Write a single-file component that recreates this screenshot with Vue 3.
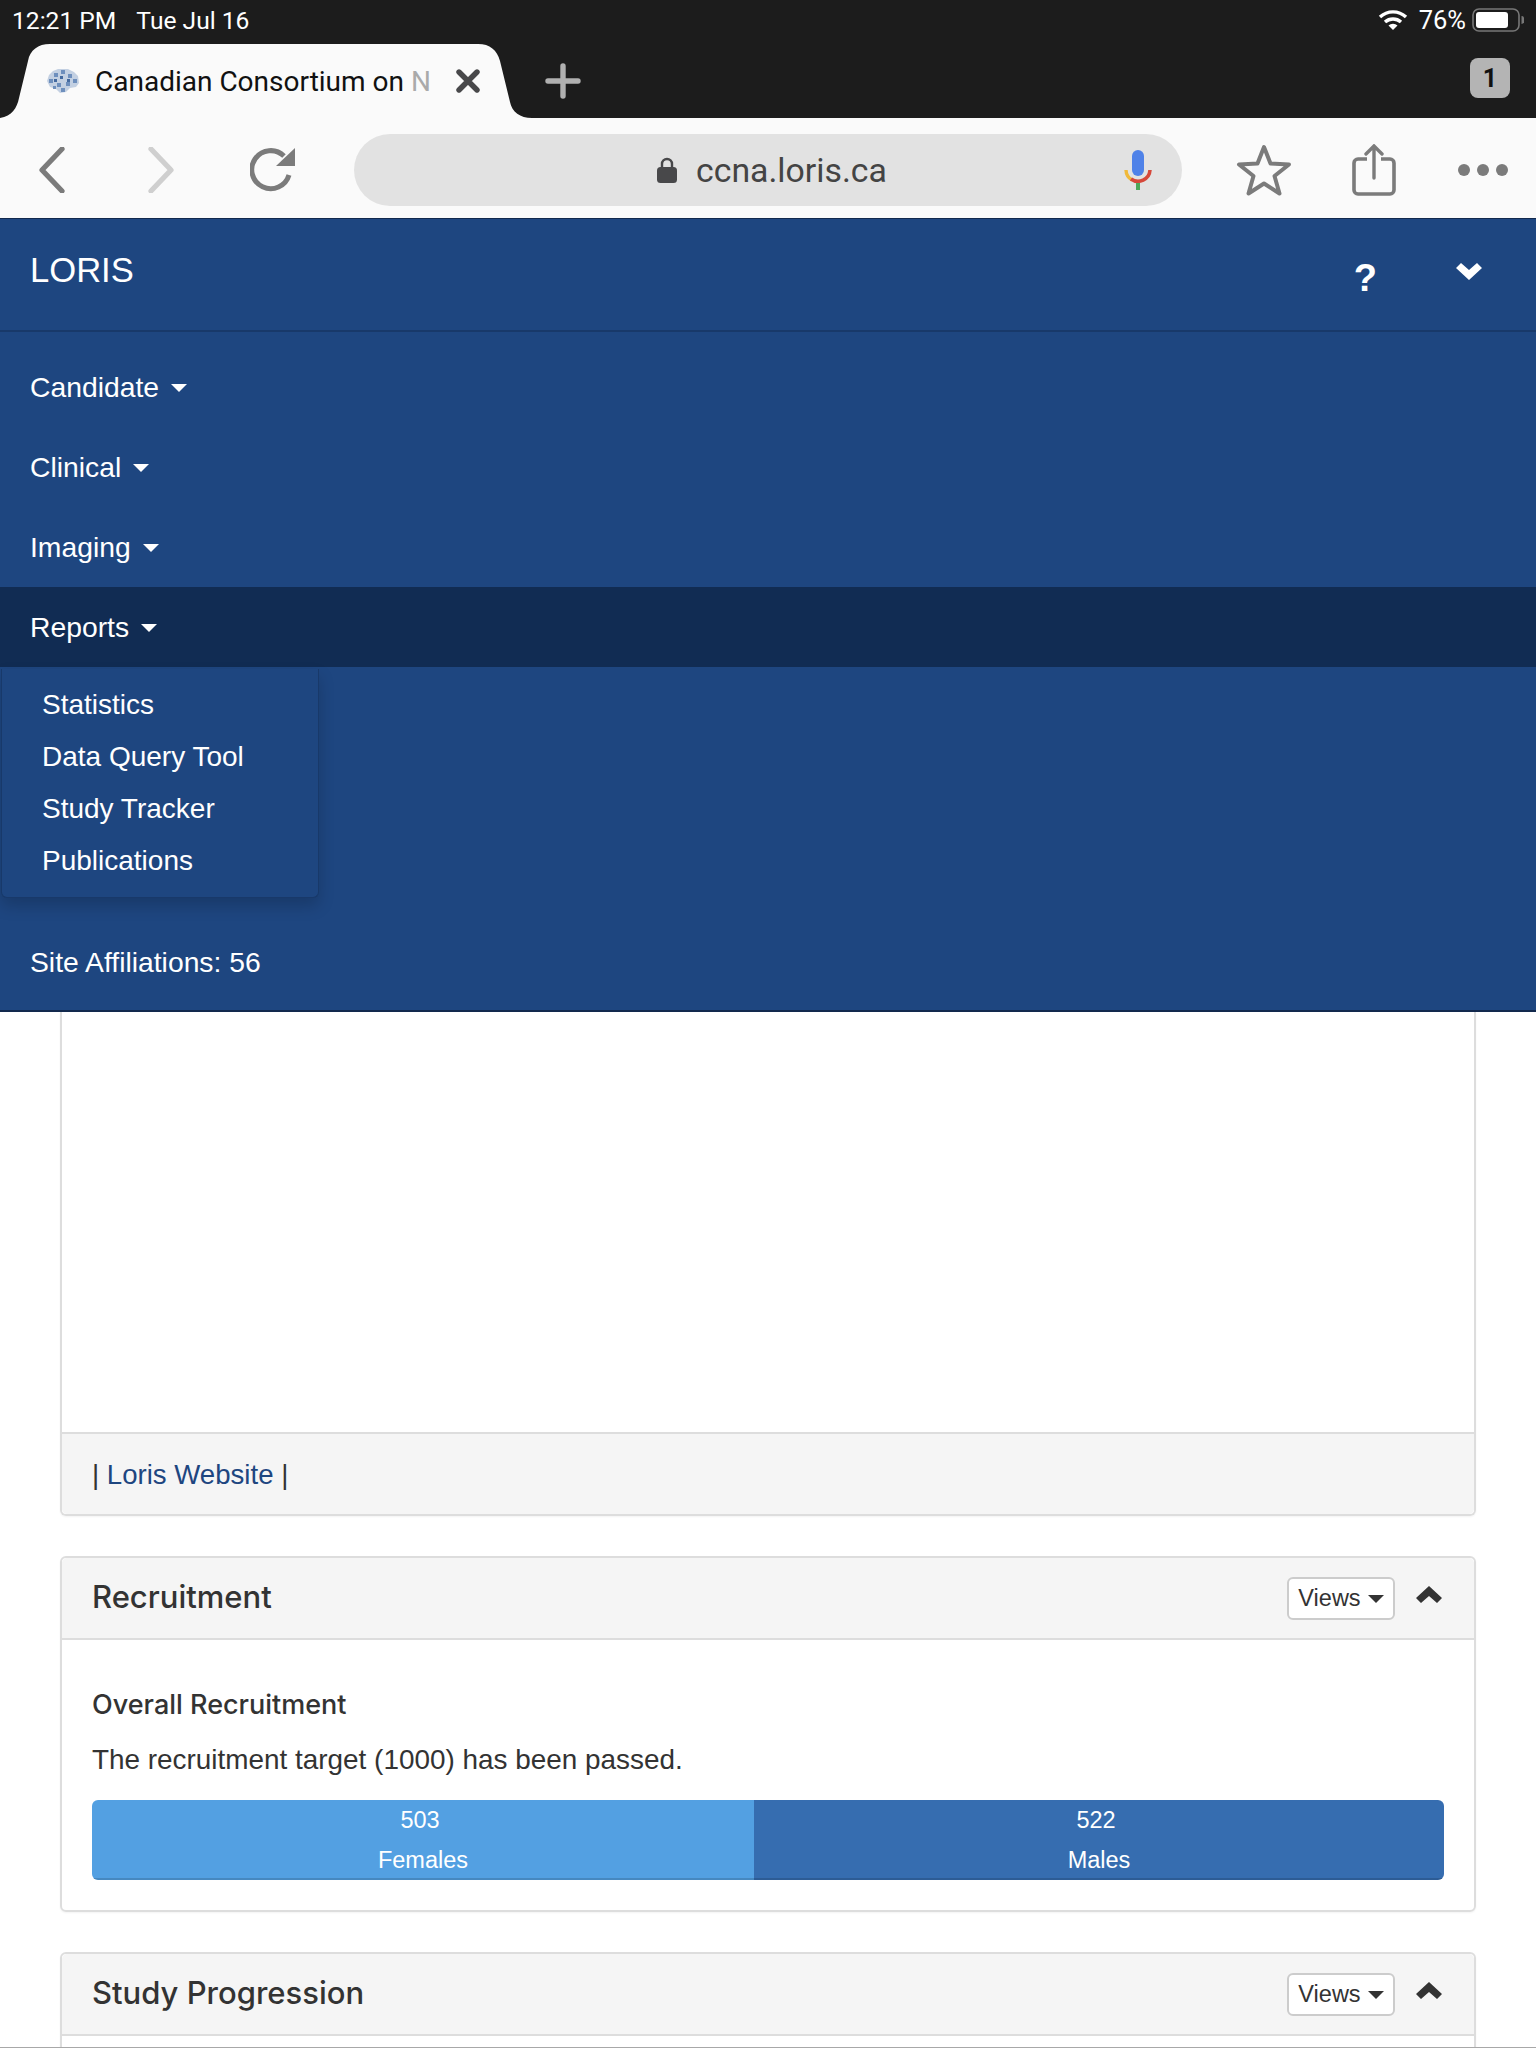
<script setup>
const navItems = ['Candidate', 'Clinical', 'Imaging']
const reportLinks = ['Statistics', 'Data Query Tool', 'Study Tracker', 'Publications']
</script>

<template>
  <div class="page">
    <div class="chrome-top">
      <div class="status-bar">
        <span class="status-time">12:21 PM</span>
        <span class="status-date">Tue Jul 16</span>
        <span class="status-spacer" />
        <svg class="wifi" width="30" height="22" viewBox="0 0 30 22">
          <path d="M2 8 A19 19 0 0 1 28 8" fill="none" stroke="#fff" stroke-width="3.4" />
          <path d="M7 13 A12 12 0 0 1 23 13" fill="none" stroke="#fff" stroke-width="3.4" />
          <path d="M15 21 L10.5 16.5 A6.5 6.5 0 0 1 19.5 16.5 Z" fill="#fff" />
        </svg>
        <span class="status-pct">76%</span>
        <svg class="battery" width="52" height="24" viewBox="0 0 52 24">
          <rect x="1" y="1" width="46" height="22" rx="6" fill="none" stroke="#777" stroke-width="1.6" />
          <rect x="4" y="4" width="32" height="16" rx="3" fill="#fff" />
          <path d="M49.5 8 a3 4 0 0 1 0 8 Z" fill="#777" />
        </svg>
      </div>
      <div class="tab-strip">
        <div class="tab">
          <svg class="tab-shape" width="536" height="74" viewBox="0 0 536 74">
            <path d="M0 74 C12 72 17 64 19 54 L28 17 C30 6 38 0 50 0 L478 0 C490 0 497 6 500 17 L510 58 C512 68 520 74 532 74 Z" fill="#fafafa" />
          </svg>
          <svg class="favicon" width="34" height="26" viewBox="0 0 34 26">
            <path d="M12 1 H22 L28 4 L32 8 L33 15 L30 19 L24 20 L20 24 L14 25 L10 21 L4 19 L1 13 L3 7 L7 3 Z" fill="#c3d0e2" />
            <g fill="#6e8fbd">
              <rect x="8" y="5" width="4" height="4" /><rect x="15" y="2" width="4" height="4" />
              <rect x="22" y="6" width="4" height="4" /><rect x="27" y="11" width="4" height="4" />
              <rect x="3" y="11" width="4" height="4" /><rect x="11" y="15" width="4" height="4" />
              <rect x="20" y="14" width="4" height="4" /><rect x="7" y="18" width="3" height="3" />
              <rect x="15" y="20" width="4" height="4" />
            </g>
            <g fill="#43699f">
              <rect x="14" y="8" width="3" height="3" /><rect x="21" y="11" width="3" height="3" />
              <rect x="8" y="11" width="3" height="3" />
            </g>
          </svg>
          <span class="tab-title">Canadian Consortium on <span class="tab-fade">N</span></span>
          <svg class="tab-close" width="24" height="24" viewBox="0 0 24 24">
            <path d="M3 3 L21 21 M21 3 L3 21" stroke="#48484a" stroke-width="5.4" stroke-linecap="round" />
          </svg>
        </div>
        <svg class="tab-plus" width="36" height="36" viewBox="0 0 36 36">
          <path d="M18 3 V33 M3 18 H33" stroke="#b0b0b0" stroke-width="5.4" stroke-linecap="round" />
        </svg>
        <span class="status-spacer" />
        <span class="tab-count">1</span>
      </div>
    </div>

    <div class="toolbar">
      <svg class="back" width="26" height="46" viewBox="0 0 26 46">
        <path d="M23 2 L3 23 L23 44" fill="none" stroke="#7b7b7b" stroke-width="5.2" stroke-linecap="round" stroke-linejoin="round" />
      </svg>
      <svg class="forward" width="26" height="46" viewBox="0 0 26 46">
        <path d="M3 2 L23 23 L3 44" fill="none" stroke="#cfcfcf" stroke-width="5.2" stroke-linecap="round" stroke-linejoin="round" />
      </svg>
      <svg class="reload" width="46" height="46" viewBox="0 0 46 46">
        <path d="M39 28 A19 19 0 1 1 34 9" fill="none" stroke="#7b7b7b" stroke-width="5" />
        <path d="M45 1 V19 H26 Z" fill="#7b7b7b" />
      </svg>
      <div class="url-pill">
        <svg class="lock" width="22" height="26" viewBox="0 0 22 26">
          <path d="M6 11 V7 a5 5 0 0 1 10 0 V11" fill="none" stroke="#48484a" stroke-width="2.4" />
          <rect x="1" y="10" width="20" height="16" rx="3.5" fill="#48484a" />
        </svg>
        <span class="url-text">ccna.loris.ca</span>
        <svg class="mic" width="28" height="40" viewBox="0 0 28 40">
          <rect x="8" y="0" width="12" height="26" rx="6" fill="#4f82e8" />
          <path d="M2 20 A12 12 0 0 0 8 30" fill="none" stroke="#f0b93a" stroke-width="3.4" />
          <path d="M7 29 A12 12 0 0 0 26 20" fill="none" stroke="#d6483a" stroke-width="3.6" />
          <rect x="12" y="33" width="4" height="7" fill="#4ca85a" />
        </svg>
      </div>
      <svg class="star" width="56" height="54" viewBox="0 0 56 54">
        <path d="M28 4 L34.5 20.5 L53 21.5 L38.5 33 L43.5 50.5 L28 40.5 L12.5 50.5 L17.5 33 L3 21.5 L21.5 20.5 Z" fill="none" stroke="#7b7b7b" stroke-width="4" stroke-linejoin="round" />
      </svg>
      <svg class="share" width="44" height="52" viewBox="0 0 44 52">
        <path d="M15 15 H6 a4 4 0 0 0 -4 4 V46 a4 4 0 0 0 4 4 H38 a4 4 0 0 0 4 -4 V19 a4 4 0 0 0 -4 -4 H29" fill="none" stroke="#7b7b7b" stroke-width="3.6" />
        <path d="M22 34 V2 M14 10 L22 2 L30 10" fill="none" stroke="#7b7b7b" stroke-width="3.4" stroke-linecap="round" />
      </svg>
      <div class="dots"><i /><i /><i /></div>
    </div>

    <nav class="navbar">
      <div class="nav-head">
        <span class="brand">LORIS</span>
        <span class="status-spacer" />
        <span class="help">?</span>
        <svg class="nav-chevron" width="26" height="18" viewBox="0 0 26 18">
          <path d="M13 18 L26 6 L21 1 L13 8 L5 1 L0 6 Z" fill="#fff" />
        </svg>
      </div>
      <div class="nav-links">
        <a v-for="item in navItems" :key="item" class="nav-link">{{ item }}<span class="caret" /></a>
        <a class="nav-link nav-link-open">Reports<span class="caret" /></a>
        <ul class="dropdown">
          <li v-for="link in reportLinks" :key="link">{{ link }}</li>
        </ul>
        <div class="site-line">Site Affiliations: 56</div>
      </div>
    </nav>

    <main class="content">
      <section class="panel panel-first">
        <div class="panel-blank" />
        <div class="panel-footer">| <a class="site-link">Loris Website</a> |</div>
      </section>

      <section class="panel">
        <header class="panel-heading">
          <h3>Recruitment</h3>
          <span class="status-spacer" />
          <button class="views-btn">Views<span class="caret caret-dark" /></button>
          <svg class="collapse" width="26" height="18" viewBox="0 0 26 18">
            <path d="M13 0 L26 12 L21 17 L13 10 L5 17 L0 12 Z" fill="#333" />
          </svg>
        </header>
        <div class="panel-body">
          <h4>Overall Recruitment</h4>
          <p>The recruitment target (1000) has been passed.</p>
          <div class="progress">
            <div class="bar bar-female">
              <span class="bar-num">503</span>
              <span class="bar-label">Females</span>
            </div>
            <div class="bar bar-male">
              <span class="bar-num">522</span>
              <span class="bar-label">Males</span>
            </div>
          </div>
        </div>
      </section>

      <section class="panel panel-last">
        <header class="panel-heading">
          <h3>Study Progression</h3>
          <span class="status-spacer" />
          <button class="views-btn">Views<span class="caret caret-dark" /></button>
          <svg class="collapse" width="26" height="18" viewBox="0 0 26 18">
            <path d="M13 0 L26 12 L21 17 L13 10 L5 17 L0 12 Z" fill="#333" />
          </svg>
        </header>
        <div class="panel-body" />
      </section>
    </main>
  </div>
</template>

<style>
html, body { background: #fff; }
</style>

<style scoped>
.page { width: 1536px; height: 2048px; overflow: hidden; display: flex; flex-direction: column; box-sizing: border-box; border-bottom: 1px solid #a8a8a8; font-family: "Liberation Sans", Arial, sans-serif; color: #333; }
.status-spacer { flex: 1; }

.chrome-top { height: 118px; background: #1c1c1c; display: flex; flex-direction: column; }
.status-bar { height: 44px; display: flex; align-items: center; padding: 0 12px 4px 12px; color: #fff; font-family: Roboto, sans-serif; font-size: 24.6px; }
.status-date { margin-left: 20px; }
.wifi { margin-right: 11px; }
.status-pct { margin-right: 6px; font-size: 25.5px; }
.tab-strip { height: 74px; display: flex; align-items: center; padding-right: 26px; }
.tab { position: relative; width: 530px; height: 74px; display: flex; align-items: center; padding-left: 46px; box-sizing: border-box; flex-shrink: 0; }
.tab-shape { position: absolute; left: 0; top: 0; }
.favicon, .tab-title, .tab-close { position: relative; }
.tab-title { margin-left: 15px; width: 336px; font-family: Roboto, sans-serif; font-size: 28px; color: #111; white-space: nowrap; }
.tab-fade { color: #aaa; }
.tab-close { margin-left: 25px; flex-shrink: 0; }
.tab-plus { margin-left: 15px; }
.tab-count { width: 40px; height: 40px; margin-top: -6px; border-radius: 8px; background: #b4b4b4; color: #111; font-family: Roboto, sans-serif; font-weight: 700; font-size: 25px; display: flex; align-items: center; justify-content: center; }

.toolbar { height: 100px; background: #fafafa; display: flex; align-items: center; padding: 4px 0 0 39px; box-sizing: border-box; }
.back { margin-right: 83px; }
.forward { margin-right: 76px; }
.reload { margin-right: 58px; }
.url-pill { width: 828px; height: 72px; border-radius: 36px; background: #e2e2e2; display: flex; align-items: center; padding-left: 302px; padding-right: 30px; box-sizing: border-box; }
.lock { margin-right: 18px; }
.url-text { font-family: Roboto, sans-serif; font-size: 33.8px; color: #444; flex: 1; }
.star { margin-left: 54px; }
.share { margin-left: 60px; }
.dots { margin-left: 62px; display: flex; gap: 7px; }
.dots i { width: 12px; height: 12px; border-radius: 50%; background: #7b7b7b; }

.navbar { height: 794px; flex-shrink: 0; background: #1e4680; color: #fff; border-top: 1px solid #12294d; border-bottom: 2px solid #12294d; box-sizing: border-box; }
.nav-head { height: 113px; display: flex; align-items: flex-start; padding-left: 30px; padding-right: 54px; border-bottom: 2px solid #18396a; box-sizing: border-box; }
.brand { margin-top: 31px; font-size: 34.6px; line-height: 40px; }
.help { margin-top: 37px; font-size: 38px; font-weight: 700; line-height: 44px; margin-right: 79px; }
.nav-chevron { margin-top: 43px; }
.nav-links { padding-top: 15px; }
.nav-link { height: 80px; display: flex; align-items: center; padding-left: 30px; font-size: 28.3px; }
.nav-link-open { background: #112c53; }
.caret { display: inline-block; width: 0; height: 0; margin-left: 12px; margin-top: 2px; border-left: 8px solid transparent; border-right: 8px solid transparent; border-top: 8px solid currentColor; }
.caret-dark { margin-left: 7px; border-left-width: 8px; border-right-width: 8px; border-top-width: 8px; color: #333; }
.dropdown { list-style: none; margin: 2px 0 0 1px; padding: 10px 0 0 40px; width: 318px; height: 229px; box-sizing: border-box; border-radius: 0 0 6px 6px; background: #1e4680; border: 1px solid #18396a; border-top: none; box-shadow: 0 8px 16px rgba(0, 0, 0, 0.18); font-size: 28px; }
.dropdown li { height: 52px; line-height: 52px; white-space: nowrap; }
.site-line { margin-top: 40px; padding-left: 30px; font-size: 28.3px; line-height: 48px; }

.content { flex: 1; min-height: 0; padding: 0 60px; background: #fff; overflow: hidden; }
.panel { border: 2px solid #ddd; border-radius: 6px; margin-bottom: 40px; box-sizing: border-box; box-shadow: 0 1px 2px rgba(0, 0, 0, 0.05); }
.panel-first { border-top: none; border-radius: 0 0 6px 6px; }
.panel-blank { height: 420px; }
.panel-footer { height: 82px; background: #f5f5f5; border-top: 2px solid #ddd; box-sizing: border-box; padding-left: 30px; font-size: 27.6px; line-height: 82px; color: #333; border-radius: 0 0 5px 5px; }
.site-link { color: #1e4680; }
.panel-heading { background: #f5f5f5; border-bottom: 2px solid #ddd; display: flex; align-items: center; padding: 0 32px 0 30px; height: 80px; border-radius: 5px 5px 0 0; }
.panel-heading h3 { margin: -3px 0 0; font-family: Inter, sans-serif; font-weight: 500; font-size: 31px; color: #333; }
.views-btn { width: 108px; height: 43px; padding: 0; background: #fff; border: 2px solid #ccc; border-radius: 6px; font-family: "Liberation Sans", Arial, sans-serif; font-size: 23.5px; color: #333; display: flex; align-items: center; justify-content: center; }
.collapse { margin-left: 21px; margin-top: -6px; }
.panel-body { padding: 45px 30px 30px; height: 270px; box-sizing: border-box; }
.panel-body h4 { margin: 0; font-family: Inter, sans-serif; font-weight: 500; font-size: 27px; line-height: 40px; color: #333; }
.panel-body p { margin: 15px 0 0; font-size: 27.9px; line-height: 40px; color: #333; }
.progress { margin-top: 20px; height: 80px; display: flex; border-radius: 6px; overflow: hidden; color: #fff; font-size: 23.5px; }
.bar { height: 80px; box-sizing: border-box; display: flex; flex-direction: column; align-items: center; text-align: center; box-shadow: inset 0 -2px 0 rgba(0, 0, 0, 0.15); }
.bar-female { width: 662px; background: #53a0e2; }
.bar-male { flex: 1; background: #366db0; }
.bar-num { line-height: 40px; margin-left: -6px; }
.bar-label { line-height: 40px; }
.panel-last { margin-bottom: 0; }
</style>
